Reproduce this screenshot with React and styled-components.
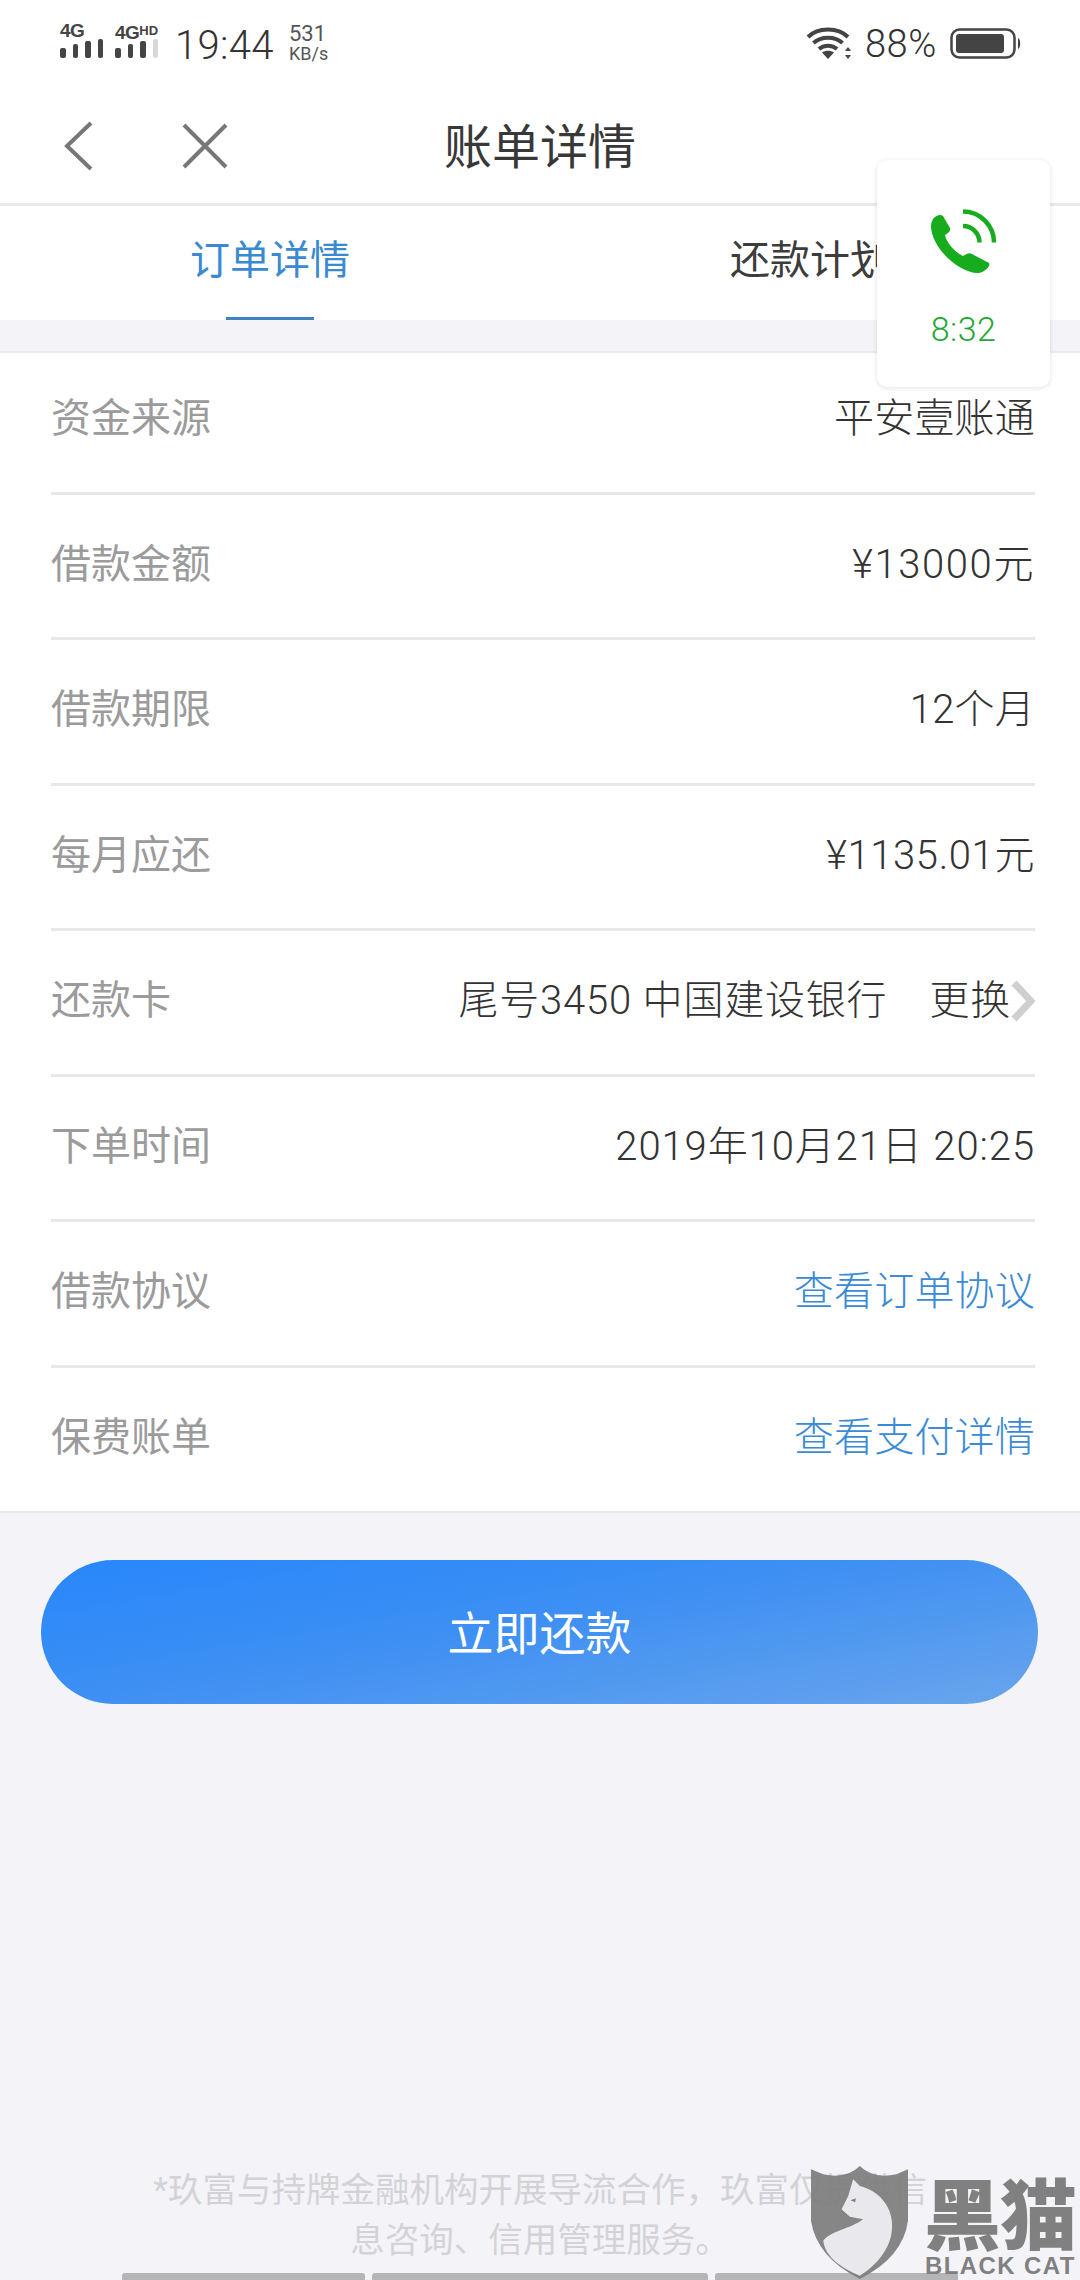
import React from "react";
import styled, { createGlobalStyle } from "styled-components";

const Global = createGlobalStyle`
  html, body { margin: 0; padding: 0; background: #f4f4f8; }
  * { box-sizing: border-box; }
`;
const FONT = `Roboto, "Noto Sans CJK SC", sans-serif`;

const Page = styled.div`
  position: relative; width: 1080px; height: 2280px; overflow: hidden;
  display: flex; flex-direction: column; background: #f4f4f8; font-family: ${FONT};
`;
const Top = styled.div`background: #fff;`;
const StatusBar = styled.div`
  height: 78px; padding: 23px 58px 0 60px; display: flex; justify-content: space-between; align-items: flex-start;
`;
const StatusLeft = styled.div`display: flex; align-items: flex-start;`;
const StatusRight = styled.div`display: flex; align-items: center; height: 40px; margin-top: 1px;`;
const Signal = styled.div`width: ${p => p.$w}px; display: flex; flex-direction: column;`;
const NetLabel = styled.div`
  font: 700 19px/15px "Liberation Sans", sans-serif; color: #444; letter-spacing: -0.5px; height: 15px; white-space: nowrap;
`;
const Sup = styled.span`font-size: 13px; vertical-align: 4px; letter-spacing: 0;`;
const Bars = styled.div`height: 20px; display: flex; align-items: flex-end; gap: 7px;`;
const Bar = styled.i`
  display: block; width: 5.5px; height: ${p => p.$h}px; border-radius: 2px; background: ${p => p.$off ? "#d8d8d8" : "#444"};
`;
const Time = styled.div`font-size: 40px; font-weight: 300; line-height: 44px; color: #333; margin: 1px 14px 0 0; width: 100px; letter-spacing: .3px;`;
const Speed = styled.div`color: #555; display: flex; flex-direction: column; margin-top: 1px;`;
const SpeedNum = styled.div`font-size: 22px; line-height: 20px;`;
const SpeedUnit = styled.div`font-size: 18px; line-height: 19px;`;
const Percent = styled.div`font-size: 38px; font-weight: 300; color: #333; margin: 0 13px 0 10px; letter-spacing: .6px;`;

const Nav = styled.div`
  height: 128px; display: grid; grid-template-columns: 1fr auto 1fr; align-items: center; padding-left: 62px;
  border-bottom: 3px solid #e9e9eb;
`;
const NavIcons = styled.div`display: flex; align-items: center; gap: 88px; margin-top: 11px;`;
const Title = styled.div`font-size: 48px; color: #383838; margin-top: 4px; margin-left: -62px;`;

const Tabs = styled.div`display: grid; grid-template-columns: 1fr 1fr; height: 114px;`;
const Tab = styled.div`
  position: relative; display: flex; justify-content: center; padding-top: 26px;
  font-size: 40px; line-height: 58px; color: ${p => p.$active ? "#3a8ad2" : "#3c3c3c"};
  ${p => p.$active && `&::after{content:"";position:absolute;left:50%;bottom:0;width:88px;height:3px;margin-left:-44px;background:#3f83c4;}`}
`;
const Gap = styled.div`height: 33px; background: #f4f4f8; border-bottom: 2px solid #ececee;`;

const List = styled.div`background: #fff; padding: 0 45px 0 51px; border-bottom: 2px solid #e9e9eb;`;
const Row = styled.div`
  height: 145.5px; display: flex; justify-content: space-between; align-items: center; padding-bottom: 10px;
  border-bottom: 3px solid #e8e8e8;
  &:first-child { height: 141.5px; padding-bottom: 14px; }
  &:last-child { border-bottom: none; height: 143px; }
`;
const Label = styled.div`font-size: 40px; color: #9b9b9b;`;
const Value = styled.div`
  font-size: 40px; font-weight: 300; color: ${p => p.$link ? "#3a8ad6" : "#333"}; display: flex; align-items: center;
  letter-spacing: ${p => p.$track}px; white-space: pre;
`;
const Change = styled.span`margin-left: 42px;`;
const ChevronSlot = styled.span`display: flex; margin-top: 8px;`;

const PayButton = styled.div`
  margin: 47px 42px 0 41px; height: 144px; border-radius: 72px;
  background: linear-gradient(170deg, #2787fb 0%, #3d8ff3 45%, #69a5ec 100%);
  color: #fff; font-size: 46px; display: flex; align-items: center; justify-content: center; padding-bottom: 4px;
`;
const Footer = styled.div`margin-top: auto; display: flex; flex-direction: column;`;
const Note = styled.div`
  padding: 0 148px; text-align: center; font-size: 34.5px; line-height: 50px; color: #d3d3d7;
`;
const HomeBars = styled.div`
  display: grid; grid-template-columns: 243px 336px 243px; gap: 7px; padding-left: 122px; margin-top: 8px; height: 7px;
`;
const HomeBar = styled.div`background: #b5b5b7; border-radius: 3px 3px 0 0;`;

const CallCard = styled.div`
  position: absolute; left: 877px; top: 160px; width: 173px; height: 227px; background: #fff; border-radius: 10px;
  box-shadow: 0 1px 5px rgba(0,0,0,.12); display: flex; flex-direction: column; align-items: center; padding-top: 49px;
`;
const CallTime = styled.div`font-size: 34px; font-weight: 300; line-height: 40px; margin-top: 35px; color: #22a832; letter-spacing: .4px;`;

const Mark = styled.div`position: absolute; left: 811px; top: 2165px; width: 269px; height: 115px;`;
const Shield = styled.svg`position: absolute; left: 0; top: 0;`;
const MarkCn = styled.div`
  position: absolute; left: 113px; top: 4px; font: 900 77px/84px "Noto Sans CJK SC", sans-serif; color: #808081; white-space: nowrap; letter-spacing: -1px;
`;
const MarkEn = styled.div`
  position: absolute; left: 114px; top: 88px; font: 700 24px/26px "Liberation Sans", sans-serif; color: #808081; white-space: nowrap; letter-spacing: 1.4px;
`;

const Back = () => (
  <svg width="32" height="52" viewBox="0 0 32 52" fill="none" stroke="#777" strokeWidth="4"><path d="M29 3 L5 26 L29 49" /></svg>
);
const Close = () => (
  <svg width="46" height="46" viewBox="0 0 46 46" fill="none" stroke="#777" strokeWidth="4"><path d="M2 2 L44 44 M44 2 L2 44" /></svg>
);
const Wifi = () => (
  <svg width="50" height="34" viewBox="0 0 48 34" fill="none" stroke="#444" strokeWidth="4">
    <path d="M2 10 C12 0 32 0 42 10" /><path d="M7.500 16 C15 9 29 9 36.500 16" /><path d="M13 22 C18 17.500 26 17.500 31 22" />
    <path d="M16 25.500 L22 32 L28 25.500 C24.500 23 19.500 23 16 25.500Z" fill="#444" stroke="none" />
    <path d="M42 20 L45 24 H39Z M42 32 L45 28 H39Z" fill="#444" stroke="none" />
  </svg>
);
const Battery = () => (
  <svg width="72" height="32" viewBox="0 0 72 32" fill="none">
    <rect x="1.500" y="1.500" width="63" height="28" rx="8" stroke="#444" strokeWidth="2.500" />
    <rect x="6" y="6" width="48" height="19" rx="3" fill="#444" />
    <path d="M68 10 C71 11 71 20 68 21Z" fill="#444" />
  </svg>
);
const Phone = () => (
  <svg width="66" height="65" viewBox="0 0 66 65" fill="none">
    <path fill="#16ac1e" d="M2 10 C5 6 10 5 12 7 L19 19 C20 22 17 24 14 26 C15 32 22 42 32 47 C35 45 38 43 41 45 L58 54 C60 57 54 63 48 64 C28 65 0 38 0 17 C0 14 1 12 2 10Z" />
    <path stroke="#16ac1e" strokeWidth="4.500" d="M32 2.500 A31 31 0 0 1 63 33.500" />
    <path stroke="#16ac1e" strokeWidth="4.500" d="M32 17 A16.500 16.500 0 0 1 48.500 33.500" />
  </svg>
);
const Chevron = () => (
  <svg width="24" height="42" viewBox="0 0 24 42" fill="none" stroke="#cfcfcf" strokeWidth="7"><path d="M3 3 L20 21 L3 39" /></svg>
);

const rows = [
  { label: "资金来源", value: "平安壹账通", track: 0.2 },
  { label: "借款金额", value: "¥13000元", track: 1.6 },
  { label: "借款期限", value: "12个月", track: 0.2 },
  { label: "每月应还", value: "¥1135.01元", track: 0.6 },
  { label: "还款卡", card: true, track: 0.8 },
  { label: "下单时间", value: "2019年10月21日 20:25", track: 0.9 },
  { label: "借款协议", value: "查看订单协议", link: true, track: 0.2 },
  { label: "保费账单", value: "查看支付详情", link: true, track: 0.2 },
];

export default function App() {
  return (
    <Page>
      <Global />
      <Top>
        <StatusBar>
          <StatusLeft>
            <Signal $w={55}>
              <NetLabel>4G</NetLabel>
              <Bars><Bar $h={10} /><Bar $h={14} /><Bar $h={17} /><Bar $h={19} /></Bars>
            </Signal>
            <Signal $w={60}>
              <NetLabel>4G<Sup>HD</Sup></NetLabel>
              <Bars><Bar $h={10} /><Bar $h={14} /><Bar $h={17} /><Bar $h={19} $off /></Bars>
            </Signal>
            <Time>19:44</Time>
            <Speed><SpeedNum>531</SpeedNum><SpeedUnit>KB/s</SpeedUnit></Speed>
          </StatusLeft>
          <StatusRight><Wifi /><Percent>88%</Percent><Battery /></StatusRight>
        </StatusBar>
        <Nav>
          <NavIcons><Back /><Close /></NavIcons>
          <Title>账单详情</Title>
          <div />
        </Nav>
        <Tabs>
          <Tab $active>订单详情</Tab>
          <Tab>还款计划</Tab>
        </Tabs>
      </Top>
      <Gap />
      <List>
        {rows.map(r => (
          <Row key={r.label}>
            <Label>{r.label}</Label>
            {r.card ? (
              <Value $track={r.track}>尾号3450 中国建设银行<Change>更换</Change><ChevronSlot><Chevron /></ChevronSlot></Value>
            ) : (
              <Value $link={r.link} $track={r.track}>{r.value}</Value>
            )}
          </Row>
        ))}
      </List>
      <PayButton>立即还款</PayButton>
      <Footer>
        <Note>*玖富与持牌金融机构开展导流合作，玖富仅提供信息咨询、信用管理服务。</Note>
        <HomeBars><HomeBar /><HomeBar /><HomeBar /></HomeBars>
      </Footer>
      <CallCard>
        <Phone />
        <CallTime>8:32</CallTime>
      </CallCard>
      <Mark>
        <Shield width="98" height="115" viewBox="93 72 295 346">
          <path fill="#808081" fillOpacity=".95" d="M93 85 L130 100 Q200 115 240 75 Q280 115 350 100 L385 85 L385 240 Q370 350 240 415 Q110 350 93 240Z" />
          <path fill="#f4f4f8" fillOpacity=".9" d="M220 115 L240 135 C300 150 340 200 337 260 C335 330 280 380 240 405 C190 385 135 350 130 300 C150 270 210 265 250 235 L210 228 L185 205 L205 165Z" />
          <path fill="#808081" d="M212 178 L228 172 L226 184Z" />
        </Shield>
        <MarkCn>黑猫</MarkCn>
        <MarkEn>BLACK CAT</MarkEn>
      </Mark>
    </Page>
  );
}
